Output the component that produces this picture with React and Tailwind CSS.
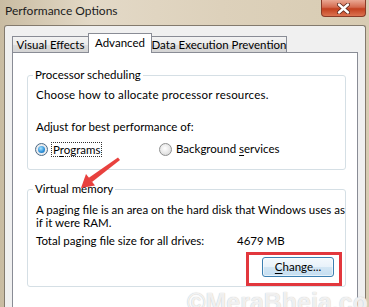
export default function App() {
  return (
    <div className="relative w-[369px] h-[307px] overflow-hidden whitespace-nowrap bg-[linear-gradient(90deg,#c9bca2,#e3d9c7_25%,#ddd1bb_60%,#d8ccb3)] font-['Segoe_UI',Lato,sans-serif] text-[11.5px] text-black">
      {/* title bar */}
      <div className="flex h-[25px] items-start justify-between">
        <div className="pl-[5px] pt-[3px] text-[12px] leading-[16px] text-[#1c1c1c]">Performance Options</div>
        <div className="mr-[3px] flex h-[17px] w-[45px] items-center justify-center rounded-b-[4px] border border-t-0 border-[#8a3b28] bg-[linear-gradient(#eaa893,#d46a4f_45%,#c2401f_55%,#dc7351)]">
          <svg width="13" height="11" viewBox="0 0 13 11">
            <path d="M2 1.5 L11 9.5 M11 1.5 L2 9.5" stroke="#5a2418" strokeWidth="4" strokeLinecap="round" />
            <path d="M2 1.5 L11 9.5 M11 1.5 L2 9.5" stroke="#ffffff" strokeWidth="2.4" strokeLinecap="round" />
          </svg>
        </div>
      </div>

      {/* dialog body */}
      <div className="ml-[4px] mr-[3px] h-[290px] rounded-t-[3px] border-x border-t border-[#837a6d] bg-[#f0f0f0] pt-[7px]">
        {/* tabs */}
        <div className="mx-[7px] flex h-[19px] items-end">
          <div className="flex h-[16px] w-[76px] items-center justify-center border border-r-0 border-b-0 border-[#898c95] bg-[linear-gradient(#f3f3f3,#ebebeb_50%,#dddddd_51%,#d4d4d4)] leading-[14px]">
            Visual Effects
          </div>
          <div className="relative z-10 mb-[-1px] flex h-[20px] w-[64px] items-start justify-center border border-b-0 border-[#898c95] bg-white pt-[2px] leading-[14px]">
            Advanced
          </div>
          <div className="flex h-[16px] w-[135px] items-center justify-center border border-l-0 border-b-0 border-[#898c95] bg-[linear-gradient(#f3f3f3,#ebebeb_50%,#dddddd_51%,#d4d4d4)] leading-[14px]">
            Data Execution Prevention
          </div>
        </div>

        {/* panel */}
        <div className="mx-[7px] h-[270px] border border-[#898c95] bg-white pl-[14px] pr-[11px] pt-[14px]">
          <fieldset className="min-w-0 rounded-[3px] border border-[#d5dfe5] px-0 pb-[12px]">
            <legend className="ml-[5px] px-[2px] leading-[16px]">Processor scheduling</legend>
            <div className="px-[8px] pt-[4px]">
              <div className="leading-[15px] tracking-[0.2px]">Choose how to allocate processor resources.</div>
              <div className="mt-[17px] leading-[15px]">Adjust for best performance of:</div>
              <div className="mt-[7px] flex h-[16px] items-center">
                <div className="ml-[-1px] flex w-[124px] items-center">
                  <span className="flex h-[13px] w-[13px] items-center justify-center rounded-full border border-[#4c6a85] bg-[radial-gradient(circle,#ffffff,#d8dde3)]">
                    <span className="h-[7px] w-[7px] rounded-full bg-[radial-gradient(circle_at_40%_35%,#a6e3ff,#2b8ed8_60%,#16619d)]"></span>
                  </span>
                  <span className="ml-[3px] border border-dotted border-[#333] px-[1px] leading-[13px]">
                    P<span className="underline underline-offset-2">r</span>ograms
                  </span>
                </div>
                <div className="flex items-center">
                  <span className="h-[13px] w-[13px] rounded-full border border-[#8e8f8f] bg-[radial-gradient(circle_at_45%_40%,#ffffff,#e4e4e4_60%,#cfcfcf)]"></span>
                  <span className="ml-[4px] leading-[14px]">
                    Background <span className="underline underline-offset-2">s</span>ervices
                  </span>
                </div>
              </div>
            </div>
          </fieldset>

          <fieldset className="mt-[11px] min-w-0 rounded-[3px] border border-[#d5dfe5] px-0 pb-[9px]">
            <legend className="ml-[5px] px-[2px] leading-[16px]">Virtual memory</legend>
            <div className="px-[8px] pt-[6px]">
              <div className="leading-[13px]">
                <div>A paging file is an area on the hard disk that Windows uses as</div>
                <div>if it were RAM.</div>
              </div>
              <div className="mt-[5px] flex leading-[13px]">
                <span className="w-[201px]">Total paging file size for all drives:</span>
                <span>4679 MB</span>
              </div>
              <div className="mt-[10px] flex justify-end pr-[3px]">
                <div className="relative">
                  <div className="flex h-[20px] w-[72px] items-center justify-center rounded-[3px] border border-[#3c7fb1] bg-[linear-gradient(#f4f9fd,#e8f2fa_50%,#d3e6f4_51%,#c4def1)] leading-[14px] shadow-[inset_0_0_0_1px_rgba(255,255,255,0.6)]">
                    <span className="underline underline-offset-2">C</span>hange...
                  </div>
                  <div className="pointer-events-none absolute -bottom-[9px] -left-[16px] -right-[8px] -top-[5px] border-[3px] border-[#e2373d]"></div>
                </div>
              </div>
            </div>
          </fieldset>
        </div>
      </div>

      {/* annotation arrow */}
      <svg className="pointer-events-none absolute left-0 top-0" width="369" height="307" viewBox="0 0 369 307">
        <path d="M118 157.5 L120 160 L92 182 L88.5 178 Z" fill="#e8413e" />
        <polygon points="81,188 95,185.5 86,174" fill="#e8413e" />
      </svg>

      {/* watermark */}
      <div className="pointer-events-none absolute left-[187px] top-[288px] font-['Liberation_Sans',Arial,sans-serif] text-[25px] font-bold leading-[28px] text-white/80 [text-shadow:0_0_1px_#b0b0b0]">
        ©MeraBheja.com
      </div>
    </div>
  );
}
